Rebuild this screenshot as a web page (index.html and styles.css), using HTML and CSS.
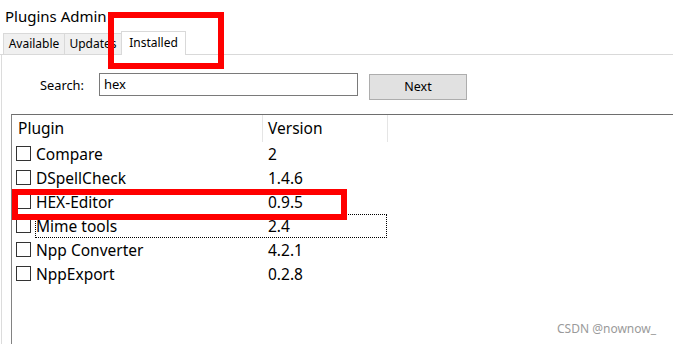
FILE: index.html
```html
<!DOCTYPE html>
<html lang="en">
<head>
  <meta charset="UTF-8" />
  <title>Plugins Admin</title>
  <link rel="stylesheet" href="styles.css">
</head>
<body>
  <div class="dialog">
    <div class="title">Plugins Admin</div>

    <div class="tabs">
      <div class="tab">Available</div>
      <div class="tab">Updates</div>
      <div class="tab active">Installed</div>
    </div>

    <div class="panel">
      <div class="search">
        <label class="search-label">Search:</label>
        <div class="search-input">hex</div>
        <div class="btn">Next</div>
      </div>

      <div class="list">
        <div class="list-head">
          <div class="col-name">Plugin</div>
          <div class="col-ver">Version</div>
          <div class="col-rest"></div>
        </div>

        <div class="row">
          <span class="check"></span>
          <span class="cells"><span class="name">Compare</span><span class="ver">2</span></span>
        </div>
        <div class="row">
          <span class="check"></span>
          <span class="cells"><span class="name">DSpellCheck</span><span class="ver">1.4.6</span></span>
        </div>
        <div class="row">
          <span class="check"></span>
          <span class="cells"><span class="name">HEX-Editor</span><span class="ver">0.9.5</span></span>
        </div>
        <div class="row">
          <span class="check"></span>
          <span class="cells focus"><span class="name">Mime tools</span><span class="ver">2.4</span></span>
        </div>
        <div class="row">
          <span class="check"></span>
          <span class="cells"><span class="name">Npp Converter</span><span class="ver">4.2.1</span></span>
        </div>
        <div class="row">
          <span class="check"></span>
          <span class="cells"><span class="name">NppExport</span><span class="ver">0.2.8</span></span>
        </div>
      </div>
    </div>
  </div>

  <!-- red annotation boxes -->
  <div class="mark mark-tab"></div>
  <div class="mark mark-row"></div>

  <div class="watermark">CSDN @nownow_</div>
</body>
</html>
```

FILE: styles.css
```css
* { box-sizing: border-box; margin: 0; padding: 0; }
html, body { width: 673px; height: 344px; overflow: hidden; }
body { position: relative; background: #fff; color: #000; font-family: "Noto Sans", "Open Sans", sans-serif; }

.title { padding: 6px 5px 5px; font-size: 15px; line-height: 20px; height: 31px; }

.tabs { display: flex; align-items: flex-end; height: 24px; padding-left: 3px; border-bottom: 1px solid #d9d9d9; }
.tab { height: 21px; border: 1px solid #d9d9d9; border-bottom: 0; background: #f0f0f0; font-size: 12px; line-height: 20px; text-align: center; }
.tab:nth-child(1) { width: 62px; }
.tab:nth-child(2) { width: 58px; margin-left: -1px; }
.tab.active { width: 65px; height: 24px; margin-left: -1px; margin-bottom: -1px; background: #fff; padding-top: 1px; }

.panel { margin-left: 1px; padding-top: 18px; border-left: 1px solid #dcdcdc; height: 289px; }

.search { display: flex; align-items: flex-start; padding-left: 38px; height: 27px; }
.search-label { width: 59px; font-size: 12.8px; line-height: 24px; }
.search-input { width: 259px; height: 23px; border: 1px solid #7a7a7a; padding-left: 4px; font-size: 13px; line-height: 21px; }
.btn { width: 98px; height: 26px; margin: 1px 0 0 11px; background: #e1e1e1; border: 1px solid #adadad; font-size: 12.5px; line-height: 24px; text-align: center; }

.list { margin: 14px 0 0 9px; height: 230px; overflow: hidden; border-top: 1px solid #6e6e6e; border-left: 1px solid #828282; font-size: 15.5px; }
.list-head { display: flex; height: 27px; line-height: 26px; }
.col-name { width: 251px; padding-left: 6px; border-right: 1px solid #e5e5e5; }
.col-ver { width: 125px; padding-left: 5px; border-right: 1px solid #e5e5e5; }
.col-rest { flex-grow: 1; }

.row { display: flex; height: 24px; padding-left: 4px; }
.check { width: 15px; height: 15px; margin-top: 4px; border: 1px solid #333; background: #fff; }
.cells { display: flex; width: 352px; height: 24px; margin-left: 4px; border: 1px dotted transparent; line-height: 22px; }
.cells.focus { border-color: #000; }
.name { width: 232px; }
.ver { flex-grow: 1; }

.mark { position: absolute; border: 6px solid #ff0000; }
.mark-tab { left: 108px; top: 12px; width: 116px; height: 57px; }
.mark-row { left: 12px; top: 189px; width: 335px; height: 31px; }

.watermark { position: absolute; left: 557px; top: 322px; font-size: 12px; line-height: 14px; color: #9a9a9a; }
```
